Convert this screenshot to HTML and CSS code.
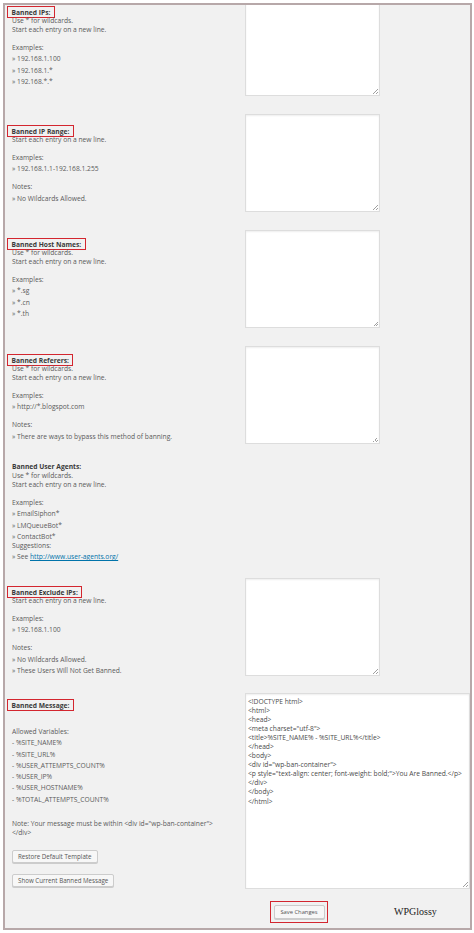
FILE: index.html
```html
<!DOCTYPE html>
<html lang="en">
<head>
<meta charset="utf-8">
<title>WP-Ban Options</title>
<link rel="stylesheet" href="styles.css">
</head>
<body>
<div class="frame">
  <div class="row r1">
    <div class="th">
      <div class="ln"><span class="hl">Banned IPs:</span></div>
      <div class="ln">Use * for wildcards.</div>
      <div class="ln">Start each entry on a new line.</div>
      <div class="ln"></div>
      <div class="ln">Examples:</div>
      <div class="it">» 192.168.1.100</div>
      <div class="it">» 192.168.1.*</div>
      <div class="it">» 192.168.*.*</div>
    </div>
    <div class="td"><textarea class="ta"></textarea></div>
  </div>

  <div class="row r2">
    <div class="th">
      <div class="ln"><span class="hl">Banned IP Range:</span></div>
      <div class="ln">Start each entry on a new line.</div>
      <div class="ln"></div>
      <div class="ln">Examples:</div>
      <div class="it">» 192.168.1.1-192.168.1.255</div>
      <div class="ln"></div>
      <div class="ln">Notes:</div>
      <div class="it">» No Wildcards Allowed.</div>
    </div>
    <div class="td"><textarea class="ta"></textarea></div>
  </div>

  <div class="row r3">
    <div class="th">
      <div class="ln"><span class="hl">Banned Host Names:</span></div>
      <div class="ln">Use * for wildcards.</div>
      <div class="ln">Start each entry on a new line.</div>
      <div class="ln"></div>
      <div class="ln">Examples:</div>
      <div class="it">» *.sg</div>
      <div class="it">» *.cn</div>
      <div class="it">» *.th</div>
    </div>
    <div class="td"><textarea class="ta"></textarea></div>
  </div>

  <div class="row r4">
    <div class="th">
      <div class="ln"><span class="hl">Banned Referers:</span></div>
      <div class="ln">Use * for wildcards.</div>
      <div class="ln">Start each entry on a new line.</div>
      <div class="ln"></div>
      <div class="ln">Examples:</div>
      <div class="it">» http://*.blogspot.com</div>
      <div class="ln"></div>
      <div class="ln">Notes:</div>
      <div class="it">» There are ways to bypass this method of banning.</div>
    </div>
    <div class="td"><textarea class="ta"></textarea></div>
  </div>

  <div class="row r5">
    <div class="th">
      <div class="ln"><span class="lb">Banned User Agents:</span></div>
      <div class="ln">Use * for wildcards.</div>
      <div class="ln">Start each entry on a new line.</div>
      <div class="ln"></div>
      <div class="ln">Examples:</div>
      <div class="it">» EmailSiphon*</div>
      <div class="it">» LMQueueBot*</div>
      <div class="it">» ContactBot*</div>
      <div class="ln">Suggestions:</div>
      <div class="it">» See <a class="lk" href="#">http://www.user-agents.org/</a></div>
    </div>
    <div class="td"></div>
  </div>

  <div class="row r6">
    <div class="th">
      <div class="ln"><span class="hl">Banned Exclude IPs:</span></div>
      <div class="ln">Start each entry on a new line.</div>
      <div class="ln"></div>
      <div class="ln">Examples:</div>
      <div class="it">» 192.168.1.100</div>
      <div class="ln"></div>
      <div class="ln">Notes:</div>
      <div class="it">» No Wildcards Allowed.</div>
      <div class="it">» These Users Will Not Get Banned.</div>
    </div>
    <div class="td"><textarea class="ta"></textarea></div>
  </div>

  <div class="row r7">
    <div class="th">
      <div class="ln"><span class="hl">Banned Message:</span></div>
      <div class="ln"></div>
      <div class="ln"></div>
      <div class="ln">Allowed Variables:</div>
      <div class="it">- %SITE_NAME%</div>
      <div class="it">- %SITE_URL%</div>
      <div class="it">- %USER_ATTEMPTS_COUNT%</div>
      <div class="it">- %USER_IP%</div>
      <div class="it">- %USER_HOSTNAME%</div>
      <div class="it">- %TOTAL_ATTEMPTS_COUNT%</div>
      <div class="ln"></div>
      <div class="ln note">Note: Your message must be within &lt;div id="wp-ban-container"&gt;</div>
      <div class="ln">&lt;/div&gt;</div>
      <div class="btns">
        <button class="btn" type="button">Restore Default Template</button>
        <button class="btn" type="button">Show Current Banned Message</button>
      </div>
    </div>
    <div class="td"><textarea class="ta ta-msg" wrap="off">&lt;!DOCTYPE html&gt;
&lt;html&gt;
&lt;head&gt;
&lt;meta charset="utf-8"&gt;
&lt;title&gt;%SITE_NAME% - %SITE_URL%&lt;/title&gt;
&lt;/head&gt;
&lt;body&gt;
&lt;div id="wp-ban-container"&gt;
&lt;p style="text-align: center; font-weight: bold;"&gt;You Are Banned.&lt;/p&gt;
&lt;/div&gt;
&lt;/body&gt;
&lt;/html&gt;</textarea></div>
  </div>

  <div class="submit">
    <span class="save-box"><button class="btn save" type="button">Save Changes</button></span>
    <span class="brand">WPGlossy</span>
  </div>
</div>
</body>
</html>
```

FILE: styles.css
```css
html, body {
  margin: 0;
  padding: 0;
  background: #ffffff;
}

body {
  width: 474px;
  height: 933px;
  overflow: hidden;
  font-family: "Open Sans", "Noto Sans", sans-serif;
  font-size: 6.7px;
  color: #5a5a5a;
}

.frame {
  margin: 3px 2px 0 3px;
  width: 469px;
  height: 927px;
  box-sizing: border-box;
  border: 2px solid #b7a8a9;
  background: #f1f1f1;
  overflow: hidden;
  display: flex;
  flex-direction: column;
}

.row {
  display: flex;
  flex: none;
  height: 116px;
}

.th {
  width: 240px;
  flex: none;
  box-sizing: border-box;
  padding: 18px 0 0 7px;
}

.td {
  padding-top: 9px;
}

.ln {
  height: 9px;
  line-height: 9px;
  white-space: nowrap;
}

.it {
  padding-top: 2.3px;
  line-height: 9px;
  height: 9px;
  white-space: nowrap;
}

.hl,
.lb {
  font-weight: 700;
  color: #3a3a3a;
}

.hl {
  border: 1.5px solid #d3262f;
  padding: 0.5px 3.5px;
  margin: 0 -5px;
}

.lk {
  color: #0073aa;
  text-decoration: underline;
}

.r1 {
  margin-top: -16px;
}

.r2 .th {
  padding-top: 21px;
}

.r5 .th {
  padding-top: 9px;
}

.r6 {
  height: 115px;
}

.r7 {
  height: 205px;
}

.r7 .th {
  padding-top: 16px;
}

.note {
  margin-top: 6px;
}

.ta {
  display: block;
  width: 135px;
  height: 98px;
  box-sizing: border-box;
  margin: 0;
  border: 1px solid #dddddd;
  box-shadow: inset 0 1px 2px rgba(0, 0, 0, 0.07);
  background: #ffffff;
  resize: vertical;
  font-family: "Open Sans", "Noto Sans", sans-serif;
  font-size: 6.7px;
  line-height: 9.1px;
  color: #4a4a4a;
  padding: 2.5px 2px;
  overflow: hidden;
}

.ta::-webkit-resizer {
  background:
    linear-gradient(135deg, transparent 0 50%, #a0a0a0 50% 60%, transparent 60% 72%, #a0a0a0 72% 82%, transparent 82%)
    no-repeat right 1px bottom 1px / 5px 5px;
}

.ta-msg {
  width: 225px;
  height: 196px;
  white-space: pre;
}

.btns {
  display: flex;
  flex-direction: column;
  align-items: flex-start;
  gap: 11px;
  margin-top: 13px;
}

.btn {
  height: 13px;
  margin: 0;
  padding: 0 5px;
  border: 1px solid #cccccc;
  border-radius: 2px;
  background: #f7f7f7;
  box-shadow: 0 1px 0 #cccccc;
  font-family: "Open Sans", "Noto Sans", sans-serif;
  font-size: 6.2px;
  line-height: 11px;
  color: #555555;
}

.submit {
  display: flex;
  align-items: center;
  padding-left: 265px;
  margin-top: 12px;
}

.save-box {
  display: flex;
  border: 1.5px solid #d3262f;
  padding: 3px 2.5px 2.5px;
}

.save {
  height: 14px;
  width: 51px;
  padding: 0;
  font-size: 5.8px;
}

.brand {
  margin-left: 66px;
  font-family: "Liberation Serif", "Times New Roman", serif;
  font-size: 10px;
  color: #222222;
}
```
